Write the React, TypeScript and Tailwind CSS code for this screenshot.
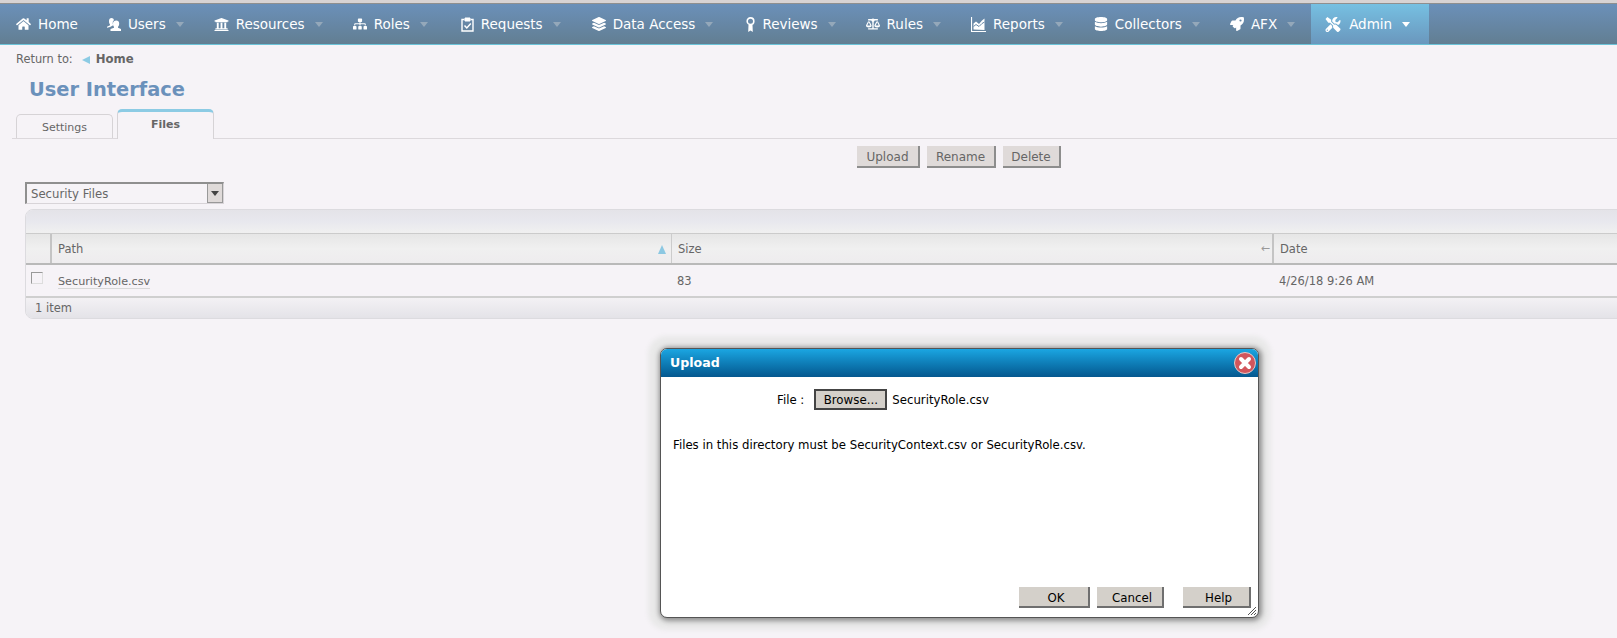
import { ReactNode } from "react";
import { FaHome, FaUniversity, FaSitemap, FaLayerGroup, FaBalanceScale, FaDatabase, FaRocket, FaTools } from "react-icons/fa";

function UsersIcon() {
  return (
    <svg viewBox="0 0 14 15" className="w-[14px] h-[15px]" fill="currentColor">
      <path d="M4.5 1a2.6 2.6 0 0 1 2.5 2 3.6 3.6 0 0 0-1.3 3.4c.1.7.4 1.3.8 1.7l-1.6.9L3 9.9l-3 .9v-1l3-1.5V7.4C2.300 6.800 2 5.600 2 4c0-1.800 1-3 2.500-3z" />
      <path d="M9.300 3.500c1.800 0 2.900 1.300 2.900 3.100 0 1.500-.5 2.600-1.200 3.200v1l3 1.300V14H3.500v-1.900l3.500-1.300v-1C6.300 9.200 6 8.100 6 6.600c0-1.800 1.500-3.100 3.300-3.100z" />
    </svg>
  );
}

function ClipboardIcon() {
  return (
    <svg viewBox="0 0 13 15" className="w-[13px] h-[15px]" fill="none" stroke="currentColor">
      <path d="M3.500 2.500H1v11.500h11V2.500H9.500" strokeWidth="1.400" />
      <path d="M4 1h5v3H4z" fill="currentColor" strokeWidth="1" />
      <path d="M3.500 8.500L5.800 11l4-4.500" strokeWidth="1.500" />
    </svg>
  );
}

function RibbonIcon() {
  return (
    <svg viewBox="0 0 9 15" className="w-[9px] h-[15px]" fill="currentColor">
      <circle cx="4.500" cy="4.200" r="3.300" fill="none" stroke="currentColor" strokeWidth="1.600" />
      <path d="M2.500 8h4l.3 7-2.300-1.500L2.200 15z" />
    </svg>
  );
}

function ReportsIcon() {
  return (
    <svg viewBox="0 0 15 15" className="w-[15px] h-[15px]" fill="currentColor">
      <path d="M.5 0v14.500H15" fill="none" stroke="currentColor" strokeWidth="1.200" />
      <path d="M2.500 12.500V6.500L5 4.500l3 2.500 3-3.500 2.500-2v11.500z" />
      <path d="M2.500 9.500l2.500-2 3 2 3-3 2.500-1.500" fill="none" stroke="#6a8aa8" strokeWidth="1" />
    </svg>
  );
}

const navItems: { label: string; icon: ReactNode; caret: boolean; pad: string; active?: boolean }[] = [
  { label: "Home", icon: <FaHome className="w-[15px] h-[14px]" />, caret: false, pad: "pl-[16px] pr-[14px]" },
  { label: "Users", icon: <UsersIcon />, caret: true, pad: "px-[15px]" },
  { label: "Resources", icon: <FaUniversity className="w-[15px] h-[15px]" />, caret: true, pad: "px-[15px]" },
  { label: "Roles", icon: <FaSitemap className="w-[14px] h-[14px]" />, caret: true, pad: "px-[15px]" },
  { label: "Requests", icon: <ClipboardIcon />, caret: true, pad: "pl-[18px] pr-[15px]" },
  { label: "Data Access", icon: <FaLayerGroup className="w-[14px] h-[14px]" />, caret: true, pad: "pl-[16px] pr-[15px]" },
  { label: "Reviews", icon: <RibbonIcon />, caret: true, pad: "pl-[18px] pr-[15px]" },
  { label: "Rules", icon: <FaBalanceScale className="w-[14px] h-[14px]" />, caret: true, pad: "px-[15px]" },
  { label: "Reports", icon: <ReportsIcon />, caret: true, pad: "px-[15px]" },
  { label: "Collectors", icon: <FaDatabase className="w-[14px] h-[14px]" />, caret: true, pad: "pl-[16px] pr-[15px]" },
  { label: "AFX", icon: <FaRocket className="w-[14px] h-[14px]" />, caret: true, pad: "px-[15px]" },
  { label: "Admin", icon: <FaTools className="w-[18px] h-[15px]" />, caret: true, pad: "ml-[1px] pl-[13px] pr-[19px]", active: true },
];

function Caret({ active }: { active?: boolean }) {
  return (
    <span className={`ml-[10px] w-0 h-0 border-x-[4px] border-x-transparent border-t-[5px] ${active ? "border-t-white" : "border-t-[#94a8ba]"}`} />
  );
}

function NavBar() {
  return (
    <div className="h-[41px] flex items-stretch bg-gradient-to-b from-[#6b90b9] to-[#627e92] border-b border-[#6cc3d8] text-white text-[13.5px]">
      {navItems.map((item) => (
        <div
          key={item.label}
          className={`flex items-center ${item.pad} ${item.active ? "bg-gradient-to-b from-[#76c0e2] to-[#6a97bd]" : ""}`}
        >
          <span className="mr-[7px] flex items-center">{item.icon}</span>
          <span>{item.label}</span>
          {item.caret && <Caret active={item.active} />}
        </div>
      ))}
    </div>
  );
}

function GreyButton({ label, width }: { label: string; width: string }) {
  return (
    <button className={`${width} h-[22px] pt-[2px] bg-[#dfdad9] border-r-2 border-b-2 border-[#8d8d8d] text-[#666] text-[12px]`}>
      {label}
    </button>
  );
}

function DialogButton({ label, width }: { label: string; width: string }) {
  return (
    <button className={`${width} h-[21px] pt-[3px] bg-[#d4d0ca] border-r-2 border-b-2 border-[#6f6f6f] text-black text-[11.8px] pl-[5px]`}>
      {label}
    </button>
  );
}

function FileGrid() {
  return (
    <div className="ml-[25px] mt-[5px] -mr-[2px] border border-[#dcdbdf] rounded-l-[8px] overflow-hidden text-[#666] text-[11.5px]">
      <div className="h-[24px] bg-gradient-to-b from-[#e4e3e8] via-[#e8e8ee] to-[#f0f0f0] border-b border-[#cbcbcb]" />
      <div className="h-[31px] flex bg-gradient-to-b from-[#e6e6e6] via-[#f0f0f0] to-[#eeecee] border-b-2 border-[#b9b9b9]">
        <div className="w-[26px] border-r-2 border-[#c4c4c4]" />
        <div className="w-[619px] pl-[6px] pr-[5px] pt-[2px] flex items-center justify-between">
          <span>Path</span>
          <span className="w-0 h-0 border-x-[4px] border-x-transparent border-b-[9px] border-b-[#8cc8e2]" />
        </div>
        <div className="w-[601px] pl-[6px] pr-[2px] pt-[2px] border-l border-[#cccccc] flex items-center justify-between">
          <span>Size</span>
          <span className="text-[#999] text-[11px]">&#8592;</span>
        </div>
        <div className="flex-1 pl-[6px] pt-[2px] border-l-2 border-[#c4c4c4] flex items-center">Date</div>
      </div>
      <div className="h-[33px] flex items-center border-b-2 border-[#cfcfcf]">
        <div className="w-[26px] flex justify-center pb-[6px] pr-[4px]">
          <span className="block w-[12px] h-[12px] border border-[#999] border-r-[#ddd] border-b-[#ddd]" />
        </div>
        <div className="w-[619px] pl-[6px] pt-[3px]">
          <span className="text-[11.2px] border-b border-[#d8d8d8]">SecurityRole.csv</span>
        </div>
        <div className="w-[601px] pl-[6px] pt-[3px]">83</div>
        <div className="flex-1 pl-[7px] pt-[3px]">4/26/18 9:26 AM</div>
      </div>
      <div className="h-[20px] pl-[9px] pt-px flex items-center bg-gradient-to-b from-[#f3f1f4] to-[#e4e3e8]">1 item</div>
    </div>
  );
}

function UploadDialog() {
  return (
    <div className="absolute left-[660px] top-[348px] w-[599px] h-[270px] rounded-[7px] border border-[#555] bg-white overflow-hidden shadow-[1px_1px_5px_2px_#8f8f8f,0_0_5px_12px_#e9e9e9] text-black text-[11.72px]">
      <div className="h-[28px] pl-[9px] pr-[2px] flex items-center justify-between bg-gradient-to-b from-[#1ba6e2] to-[#05588f]">
        <span className="text-white font-bold text-[12.6px]">Upload</span>
        <svg viewBox="0 0 22 22" className="w-[22px] h-[22px]">
          <circle cx="11" cy="11" r="10.500" fill="#d2565c" stroke="#e6c9c9" />
          <path d="M7 7 L15 15 M15 7 L7 15" stroke="#fff" strokeWidth="4" strokeLinecap="round" />
        </svg>
      </div>
      <div className="flex items-center h-[21px] mt-[12px] pl-[116px]">
        <span className="whitespace-pre pt-[3px]">File :</span>
        <button className="ml-[10px] w-[73px] h-[21px] pt-px bg-[#d4d0ca] border-2 border-[#444] text-black text-[11.8px]">Browse...</button>
        <span className="ml-[5px] pt-[3px]">SecurityRole.csv</span>
      </div>
      <div className="mt-[27px] pl-[12px]">Files in this directory must be SecurityContext.csv or SecurityRole.csv.</div>
      <div className="absolute left-[358px] top-[238px] flex">
        <DialogButton label="OK" width="w-[71px]" />
        <div className="ml-[7px]"><DialogButton label="Cancel" width="w-[67px]" /></div>
        <div className="ml-[19px]"><DialogButton label="Help" width="w-[68px]" /></div>
      </div>
      <svg viewBox="0 0 8 8" className="absolute right-[2px] bottom-[2px] w-[8px] h-[8px]">
        <path d="M0 8 L8 0 M3 8 L8 3 M6 8 L8 6" stroke="#555" strokeWidth="1" />
      </svg>
    </div>
  );
}

export default function App() {
  return (
    <div className="relative w-[1617px] h-[638px] overflow-hidden bg-[#f6f3f7] font-['DejaVu_Sans',sans-serif]">
      <div className="h-[4px] bg-[#d8d3d3] border-b border-[#8f8f8f]" />
      <NavBar />
      <div className="h-[28px] pl-[16px] pt-[2px] flex items-center text-[11.4px] text-[#666]">
        <span>Return to:</span>
        <span className="ml-[9px] w-0 h-0 border-y-[4px] border-y-transparent border-r-[8px] border-r-[#8ccbe4]" />
        <span className="ml-[6px] font-bold text-[11.7px]">Home</span>
      </div>
      <h1 className="pl-[29px] h-[30px] leading-[34px] text-[19.4px] font-bold text-[#6b91bb]">User Interface</h1>
      <div className="mt-[6px] h-[30px] ml-[12px] flex items-end border-b border-[#dcd8dc] text-[11px] text-[#666]">
        <div className="ml-[4px] w-[97px] h-[24px] pt-[3px] flex items-center justify-center border border-b-0 border-[#d6d3d6] rounded-t-[5px]">Settings</div>
        <div className="ml-[4px] w-[97px] h-[30px] -mb-px flex items-center justify-center font-bold border-x border-[#d6d3d6] border-t-[3px] border-t-[#8ccbe4] rounded-t-[5px] bg-[#f6f3f7]">Files</div>
      </div>
      <div className="mt-[7px] pl-[857px] flex gap-[7px]">
        <GreyButton label="Upload" width="w-[63px]" />
        <GreyButton label="Rename" width="w-[69px]" />
        <GreyButton label="Delete" width="w-[58px]" />
      </div>
      <div className="mt-[14px] ml-[25px] w-[199px] h-[22px] flex items-center justify-between border-t-2 border-l-2 border-r border-b border-t-[#8f8f8f] border-l-[#8f8f8f] border-r-[#d8d4d8] border-b-[#d8d4d8] pl-[4px] text-[11.7px] text-[#666]">
        <span className="pt-[2px]">Security Files</span>
        <span className="w-[16px] h-[19px] flex items-center justify-center bg-[#dfdad9] border border-[#999] border-t-0">
          <span className="w-0 h-0 border-x-[4px] border-x-transparent border-t-[5px] border-t-[#444]" />
        </span>
      </div>
      <FileGrid />
      <UploadDialog />
    </div>
  );
}
